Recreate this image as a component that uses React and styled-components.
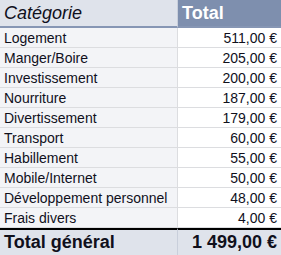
import React from "react";
import styled, { createGlobalStyle } from "styled-components";

const GlobalStyle = createGlobalStyle`
  html, body {
    margin: 0;
    padding: 0;
    background: #ffffff;
  }
  body {
    font-family: "Liberation Sans", Arial, sans-serif;
  }
`;

const Table = styled.div`
  width: 281px;
  display: grid;
  grid-template-columns: 177px 1fr;
  color: #10101c;
`;

const HeadCell = styled.div`
  height: 26px;
  display: flex;
  align-items: center;
  padding: 0 4px;
  border-bottom: 2px solid #8696b4;
  font-size: 18px;
  background: ${(p) => (p.$accent ? "#7e8fae" : "#dfe3eb")};
  color: ${(p) => (p.$accent ? "#ffffff" : "#10101c")};
  font-style: ${(p) => (p.$accent ? "normal" : "italic")};
  font-weight: ${(p) => (p.$accent ? "bold" : "normal")};
  border-left: ${(p) => (p.$accent ? "1px solid #c9cfdb" : "none")};
`;

const Cell = styled.div`
  height: 19px;
  display: flex;
  align-items: center;
  justify-content: ${(p) => (p.$num ? "flex-end" : "flex-start")};
  padding: 0 4px;
  font-size: 14px;
  background: ${(p) => (p.$num ? "#ffffff" : "#f3f4f7")};
  border-bottom: 1px solid #dcdde0;
  border-left: ${(p) => (p.$num ? "1px solid #dcdde0" : "none")};
  white-space: nowrap;
`;

const TotalCell = styled.div`
  height: 25px;
  display: flex;
  align-items: center;
  justify-content: ${(p) => (p.$num ? "flex-end" : "flex-start")};
  padding: 0 4px;
  font-size: 18px;
  font-weight: bold;
  background: #dfe3eb;
  border-top: 2px solid #000;
  border-left: ${(p) => (p.$num ? "1px solid #c9cfdb" : "none")};
`;

const rows = [
  ["Logement", "511,00 €"],
  ["Manger/Boire", "205,00 €"],
  ["Investissement", "200,00 €"],
  ["Nourriture", "187,00 €"],
  ["Divertissement", "179,00 €"],
  ["Transport", "60,00 €"],
  ["Habillement", "55,00 €"],
  ["Mobile/Internet", "50,00 €"],
  ["Développement personnel", "48,00 €"],
  ["Frais divers", "4,00 €"],
];

export default function App() {
  return (
    <>
      <GlobalStyle />
      <Table>
        <HeadCell>Catégorie</HeadCell>
        <HeadCell $accent>Total</HeadCell>
        {rows.map(([name, value]) => (
          <React.Fragment key={name}>
            <Cell>{name}</Cell>
            <Cell $num>{value}</Cell>
          </React.Fragment>
        ))}
        <TotalCell>Total général</TotalCell>
        <TotalCell $num>1 499,00 €</TotalCell>
      </Table>
    </>
  );
}
